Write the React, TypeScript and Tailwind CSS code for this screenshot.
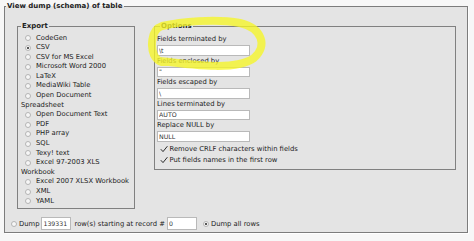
import React from "react";

function Radio({ checked = false }: { checked?: boolean }) {
  return (
    <span className="flex h-[6px] w-[6px] shrink-0 items-center justify-center rounded-full border border-[#b4b4b4] bg-[#f6f6f6]">
      {checked && <span className="h-[2px] w-[2px] rounded-full bg-[#222]" />}
    </span>
  );
}

function Check() {
  return (
    <svg width="8" height="8" viewBox="0 0 8 8" className="shrink-0">
      <path d="M0.8 4.2 L3 6.6 L7.4 1.2" fill="none" stroke="#2a2a2a" strokeWidth="1" />
    </svg>
  );
}

const exportItems: { label: string; cont?: string; checked?: boolean }[] = [
  { label: "CodeGen" },
  { label: "CSV", checked: true },
  { label: "CSV for MS Excel" },
  { label: "Microsoft Word 2000" },
  { label: "LaTeX" },
  { label: "MediaWiki Table" },
  { label: "Open Document", cont: "Spreadsheet" },
  { label: "Open Document Text" },
  { label: "PDF" },
  { label: "PHP array" },
  { label: "SQL" },
  { label: "Texy! text" },
  { label: "Excel 97-2003 XLS", cont: "Workbook" },
  { label: "Excel 2007 XLSX Workbook" },
  { label: "XML" },
  { label: "YAML" },
];

const fields = [
  { label: "Fields terminated by", value: "\\t" },
  { label: "Fields enclosed by", value: '"' },
  { label: "Fields escaped by", value: "\\" },
  { label: "Lines terminated by", value: "AUTO" },
  { label: "Replace NULL by", value: "NULL" },
];

export default function App() {
  return (
    <div className="relative h-[241px] w-[474px] overflow-hidden bg-[#f7f7f7] pt-[1px] font-['DejaVu_Sans',sans-serif] text-[6.8px] text-[#222]">
      <fieldset className="ml-[4px] w-[464px] border border-[#7c7c7c] bg-[#e4e4e4] pb-[2px] shadow-[1px_1px_0_#ffffff]">
        <legend className="ml-[1px] px-[1px] text-[7px] font-bold leading-[10px]">View dump (schema) of table</legend>
        <div className="mt-[10px] flex items-start">
          <fieldset className="ml-[12px] w-[118px] border border-[#808080] pb-[2px] pl-0 pt-[2.5px]">
            <legend className="ml-[3px] px-[1px] text-[7px] font-bold leading-[10px]">Export</legend>
            {exportItems.map((it) => (
              <div key={it.label}>
                <div className="flex h-[9.6px] items-center leading-[9.6px]">
                  <span className="ml-[7px]">
                    <Radio checked={it.checked} />
                  </span>
                  <span className="ml-[5px] whitespace-nowrap">{it.label}</span>
                </div>
                {it.cont && <div className="h-[9.6px] pl-[3px] leading-[9.6px]">{it.cont}</div>}
              </div>
            ))}
          </fieldset>
          <fieldset className="ml-[19px] w-[302px] border border-[#808080] pb-[3.5px] pl-[2px] pt-[3px]">
            <legend className="ml-[3px] px-[1px] text-[7px] font-bold leading-[10px]">Options</legend>
            {fields.map((f) => (
              <div key={f.label}>
                <div className="h-[10px] whitespace-nowrap leading-[10px]">{f.label}</div>
                <input
                  readOnly
                  value={f.value}
                  className="mt-[1px] block h-[10.5px] w-[93px] border border-[#b9b9b9] bg-white px-[1px] text-[6.3px] leading-[8px] text-[#333] outline-none"
                />
              </div>
            ))}
            <div className="mt-[2px] flex h-[11px] items-center">
              <span className="ml-[3px]">
                <Check />
              </span>
              <span className="ml-[1.5px] whitespace-nowrap">Remove CRLF characters within fields</span>
            </div>
            <div className="flex h-[11px] items-center">
              <span className="ml-[3px]">
                <Check />
              </span>
              <span className="ml-[1.5px] whitespace-nowrap">Put fields names in the first row</span>
            </div>
          </fieldset>
        </div>
        <div className="mt-[8px] flex h-[13px] items-center whitespace-nowrap">
          <span className="ml-[6px]">
            <Radio />
          </span>
          <span className="ml-[2px]">Dump</span>
          <input
            readOnly
            value="139331"
            className="ml-[2px] block h-[13px] w-[30px] border border-[#b9b9b9] bg-white px-[1px] text-[6.2px] text-[#333] outline-none"
          />
          <span className="ml-[3px]">row(s) starting at record #</span>
          <input
            readOnly
            value="0"
            className="ml-[2px] block h-[13px] w-[30px] border border-[#b9b9b9] bg-white px-[1px] text-[6.2px] text-[#333] outline-none"
          />
          <span className="ml-[6px]">
            <Radio checked />
          </span>
          <span className="ml-[2px]">Dump all rows</span>
        </div>
      </fieldset>
      <svg className="pointer-events-none absolute left-0 top-0" width="474" height="241" viewBox="0 0 474 241">
        <defs>
          <filter id="soft" x="-10%" y="-10%" width="120%" height="120%">
            <feGaussianBlur stdDeviation="0.7" />
          </filter>
        </defs>
        <path
          d="M160 61 C 200 66, 238 70, 254 58 C 268 46, 262 28, 240 23 C 215 18, 180 22, 162 26 C 150 30, 151 48, 154 55 C 156 59, 158 61, 162 62"
          fill="none"
          stroke="rgba(246,246,40,0.78)"
          strokeWidth="8"
          strokeLinecap="round"
          filter="url(#soft)"
        />
      </svg>
    </div>
  );
}
